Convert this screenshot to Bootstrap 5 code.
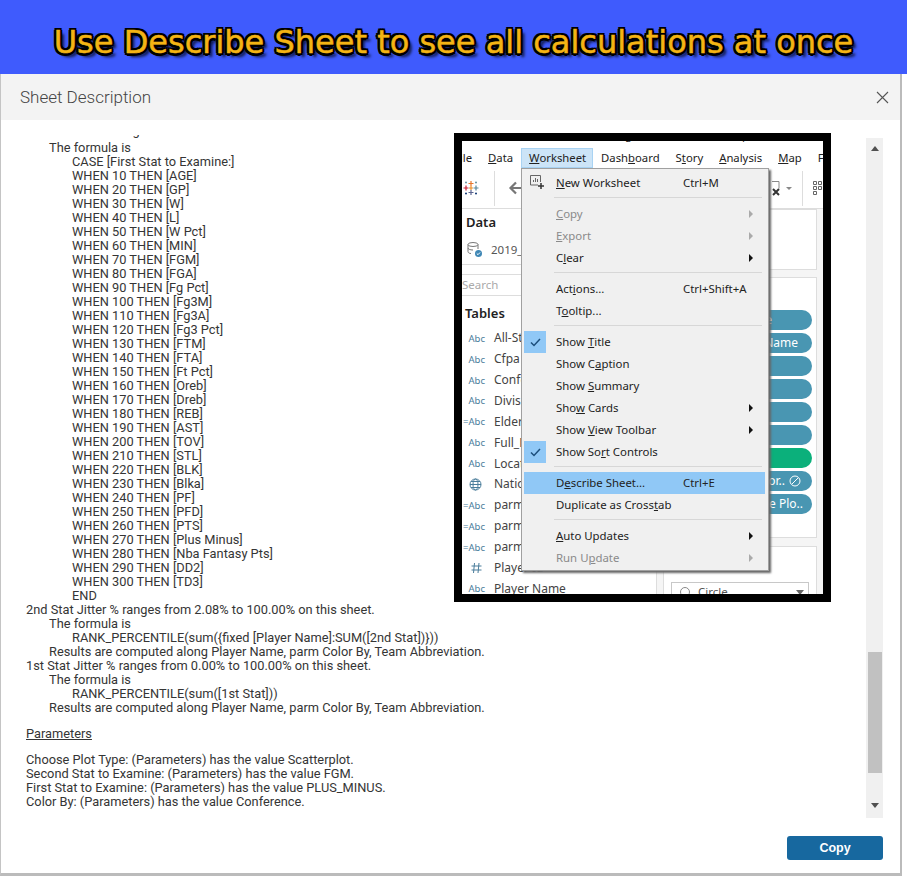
<!doctype html>
<html lang="en">
<head>
<meta charset="utf-8">
<title>Use Describe Sheet</title>
<link href="https://cdn.jsdelivr.net/npm/bootstrap@5.3.0/dist/css/bootstrap.min.css" rel="stylesheet">
<style>
html,body{height:882px;overflow:hidden;background:#fff}
body{font-family:"Roboto","Liberation Sans",sans-serif;color:#333}
.promo{height:74px;padding-top:9px;background:#3f5bfd;font-family:"DejaVu Sans",sans-serif;font-size:32px;color:#f4b414;white-space:nowrap;-webkit-text-stroke:.5px #f4b414;
text-shadow:-2.5px 0 #000,2.5px 0 #000,0 -2.5px #000,0 2.5px #000,-2px -2px #000,2px -2px #000,-2px 2px #000,2px 2px #000,4px 4px 3px #000c}
.sheet{width:902px;height:802px;border:0;border-radius:0;border-left:1px solid #c4c4c4;border-right:2px solid #bbb;border-bottom:3px solid #bbb;box-shadow:none}
.sheet-head{height:46px;background:#f3f3f3;padding:0 11px 0 19px;border:0;border-radius:0}
.sheet-title{font-size:17px;font-weight:300;line-height:1;color:#444}
.close-x{background:none;border:0;padding:0;line-height:0}
.sheet-body{padding:13px 17px 0 25px;min-height:0;flex:1}
.pane{flex:1;height:684px;overflow:hidden;font-size:12.8px;line-height:14px;color:#353535}
.pane div{white-space:nowrap}
.cut{margin-top:2px;height:6px;overflow:hidden}
.cut span{display:block;margin-top:-11px}
.in1{padding-left:23px}.in2{padding-left:46px}
.gap12{margin-top:12px}
.sbar{width:17px;height:680px;margin-top:5px;background:#f0f0f0;flex:none}
.sbar i{display:block;width:0;height:0;border-left:4px solid transparent;border-right:4px solid transparent}
.sup{border-bottom:5px solid #505050}
.sdn{border-top:5px solid #505050}
.sthumb{width:14px;height:121px;background:#c1c1c1;margin-top:501px;margin-bottom:30px}
.sheet-foot{padding:22px 17px 13px;border:0}
.copy-btn{width:96px;height:24px;padding:0;background:#17689f;border:0;border-radius:3px;color:#fff;font:700 12.5px/24px "Liberation Sans",sans-serif}
.copy-btn:hover{background:#17689f;color:#fff}
/* pasted screenshot */
.shot{float:right;width:377px;height:469px;margin-right:35px;border:8px solid #000;background:#fff;overflow:hidden;position:relative;font-family:"Noto Sans","Open Sans",sans-serif;font-size:11.5px;color:#222;white-space:nowrap;line-height:1.2}
.shot u{text-decoration-thickness:1px;text-underline-offset:1px}
.strip{height:7px;position:relative;overflow:hidden}
.strip span{position:absolute;top:-13px;color:#333}
.frag1{left:163px}.frag2{left:280px}
.mbar{height:20px;margin-left:-16px;font-size:11.3px}
.mbar span{padding:0 8px;line-height:20px}
.mbar .on{background:#cce4f7;box-shadow:inset 0 0 0 1px #a9d3f3;width:72px}
.tbar{height:41px;border-bottom:1px solid #ddd;padding-left:1px}
.tsep{width:1px;height:35px;background:#ddd}
.g15{margin-left:15px}.g13{margin-left:13px}.g5{margin-left:5px}.g10{margin-left:10px}
.work{height:393px}
.lside{width:195px;flex:none;border-right:1px solid #ddd;background:#fff}
.lhead{height:56px;border-bottom:1px solid #ddd;padding:5px 4px 0;}
.lhead b{font-size:13px;font-weight:600;display:block;line-height:17px}
.ds{margin-top:10px;color:#555;font-size:11.5px}
.lsearch{height:22px;margin-top:9px;border-top:1px solid #ddd;border-bottom:1px solid #ddd;color:#aaa;line-height:20px;padding-left:0}
.ltables{font-size:13px;font-weight:600;padding:9px 3px 0;line-height:17px;height:32px}
.lrow{height:20.9px;display:flex;align-items:center;color:#444;font-size:12px}
.lrow em{font-style:normal;width:23px;text-align:right;margin-right:9px;font-size:9.5px;color:#4a7d9b;flex:none}
.lrow em svg{margin-right:3px}
.rside{flex:1;background:#f5f5f5;padding:0 6px}
.rcard{background:#fff;border:1px solid #ddd}
.rc1{height:61px;margin-bottom:7px}
.rc2{height:261px;margin-bottom:8px;padding:32px 4px 0 0}
.rc3{height:80px;padding:35px 7px 0}
.pill{height:20px;margin-bottom:3px;background:#4996b2;border-radius:10px;color:#fff;text-align:right;padding-right:14px;line-height:20px;font-size:12px}
.pill.gr{background:#0bb07b}
.pill.hid{padding-right:50px}
.pill.p40{padding-right:40px}
.pill.p9{padding-right:9px}
.pill.p11{padding-right:11px}
.markbox{height:20px;border:1px solid #c8c8c8;padding-left:8px;color:#555}
.drop{border-top:5px solid #666;border-left:4px solid transparent;border-right:4px solid transparent;width:0;height:0}
.drop.pale{border-top-color:#888;border-left-width:3px;border-right-width:3px;border-top-width:3px}
.wmenu{position:absolute;left:59px;top:27px;width:248px;height:403px;background:#f0f0f0;border:1px solid #a0a0a0;box-shadow:2px 2px 2px #666;padding:3px 3px 0 2px;font-size:11.4px}
.mi{height:22px;line-height:22px;padding-left:32px;display:flex;position:relative}
.mi .lab{width:127px;flex:none}
.mi.off{color:#8a8a8a}
.mi.hot{background:#90c8f6}
.mi .chk{position:absolute;left:0;top:0;width:22px;height:22px;background:#90c8f6;display:flex;align-items:center;justify-content:center}
.mi .tri{position:absolute;right:12px;top:7px;border-left:4px solid #111;border-top:4px solid transparent;border-bottom:4px solid transparent;width:0;height:0}
.mi.off .tri{border-left-color:#aaa}
.mi .mico{position:absolute;left:5px;top:2px}
.msep{height:1px;background:#d7d7d7;margin:3px 3px 5px 30px}
</style>
</head>
<body>
<header class="promo d-flex align-items-center justify-content-center">Use Describe Sheet to see all calculations at once</header>
<section class="modal-content sheet d-flex flex-column">
  <div class="modal-header sheet-head d-flex align-items-center justify-content-between">
    <h1 class="modal-title sheet-title">Sheet Description</h1>
    <button class="close-x" type="button" aria-label="Close"><svg width="13" height="13" viewBox="0 0 13 13"><path d="M1 1 12 12M12 1 1 12" stroke="#555" stroke-width="1.1" fill="none"/></svg></button>
  </div>
  <div class="modal-body sheet-body d-flex align-items-start">
    <div class="pane">
      <div class="shot">
        <div class="strip"><span class="frag1">g</span><span class="frag2">p</span></div>
        <div class="mbar d-flex">
          <span>File</span><span><u>D</u>ata</span><span class="on"><u>W</u>orksheet</span><span>Dash<u>b</u>oard</span><span>S<u>t</u>ory</span><span><u>A</u>nalysis</span><span><u>M</u>ap</span><span>Format</span>
        </div>
        <div class="tbar d-flex align-items-center">
          <svg width="16" height="16" viewBox="0 0 16 16" fill="none" stroke-width="1.2"><path d="M8 1v5M5.500 3.500h5" stroke="#e8762b"/><path d="M8 10v5M5.500 12.500h5" stroke="#5b6591"/><path d="M3 5.500v5M.5 8h5" stroke="#c72035"/><path d="M13 5.500v5M10.500 8h5" stroke="#59879b"/><path d="M6 8h4M8 6v4" stroke="#eb912b"/><path d="M3 1.500v2M2 2.500h2M13 1.500v2M12 2.500h2" stroke="#7099a6"/><path d="M3 12.500v2M2 13.500h2M13 12.500v2M12 13.500h2" stroke="#1f457e"/></svg>
          <div class="tsep g15"></div>
          <svg class="g13" width="16" height="14" viewBox="0 0 16 14" fill="none"><path d="M15 7H3M8 1.500 2.500 7 8 12.500" stroke="#777" stroke-width="2.200"/></svg>
          <div class="flex-grow-1"></div>
          <svg width="13" height="16" viewBox="0 0 13 16" fill="none"><path d="M4 1.500h7v7" stroke="#888"/><path d="M5 9l6 6M11 9l-6 6" stroke="#333" stroke-width="2"/></svg>
          <div class="drop pale g5"></div>
          <div class="tsep g10"></div>
          <svg class="g10" width="10" height="16" viewBox="0 0 10 16" fill="none" stroke="#666"><path d="M.5 1.500h3v3h-3zM5.500 1.500h3v3h-3zM.5 6.500h3v3h-3zM5.500 6.500h3v3h-3zM.5 11.500h3v3h-3z"/></svg>
        </div>
        <div class="work d-flex">
          <div class="lside">
            <div class="lhead"><b>Data</b>
              <div class="ds d-flex align-items-center gap-1"><svg width="17" height="17" viewBox="0 0 17 17" fill="none" stroke="#777"><ellipse cx="7" cy="3.500" rx="5" ry="2"/><path d="M2 3.500v7c0 1 1 2 3 2M12 3.500V8M2 7c0 1 2 2 5 2"/><circle cx="12.500" cy="12.500" r="3.500" fill="#3f87b5" stroke="none"/><path d="M10.800 12.500l1.200 1.200 2-2.200" stroke="#fff"/></svg><span class="ms-1">2019_NBA_Stats</span></div>
            </div>
            <div class="lsearch">Search</div>
            <div class="ltables">Tables</div>
            <div class="lrow"><em>Abc</em>All-Star</div>
            <div class="lrow"><em>Abc</em>Cfpa Rank</div>
            <div class="lrow"><em>Abc</em>Conference</div>
            <div class="lrow"><em>Abc</em>Division</div>
            <div class="lrow"><em>=Abc</em>Elder</div>
            <div class="lrow"><em>Abc</em>Full_Name</div>
            <div class="lrow"><em>Abc</em>Location</div>
            <div class="lrow"><em><svg width="13" height="13" viewBox="0 0 13 13" fill="none" stroke="#4a7d9b"><circle cx="6.500" cy="6.500" r="5.500"/><ellipse cx="6.500" cy="6.500" rx="2.500" ry="5.500"/><path d="M1 6.500h11M2 3.500h9M2 9.500h9"/></svg></em>Nationality</div>
            <div class="lrow"><em>=Abc</em>parm Color By</div>
            <div class="lrow"><em>=Abc</em>parm Plot</div>
            <div class="lrow"><em>=Abc</em>parm Stat</div>
            <div class="lrow"><em><svg width="11" height="12" viewBox="0 0 11 12" fill="none" stroke="#4a7d9b"><path d="M3.500 1 2.500 11M8 1 7 11M.5 4h10M.5 8h10"/></svg></em>Player Id</div>
            <div class="lrow"><em>Abc</em>Player Name</div>
          </div>
          <div class="rside">
            <div class="rcard rc1"></div>
            <div class="rcard rc2">
              <div class="pill p40">Age</div><div class="pill">Player Name</div><div class="pill hid">Team</div><div class="pill hid">Stat</div><div class="pill hid">Stat</div><div class="pill hid">Stat</div><div class="pill gr hid">Jitter</div>
              <div class="pill p11 d-flex align-items-center justify-content-end gap-1"><span>Color..</span><svg width="12" height="12" viewBox="0 0 12 12" fill="none" stroke="#fff"><circle cx="6" cy="6" r="5"/><path d="M3 9 9 3"/></svg></div>
              <div class="pill p9">Tooltip Scale Plo..</div>
            </div>
            <div class="rcard rc3">
              <div class="markbox d-flex align-items-center"><svg width="10" height="10" viewBox="0 0 10 10" fill="none" stroke="#888"><circle cx="5" cy="5" r="4.500"/></svg><span class="ms-2">Circle</span><span class="flex-grow-1"></span><span class="drop me-1"></span></div>
            </div>
          </div>
        </div>
        <div class="wmenu">
          <div class="mi"><svg class="mico" width="16" height="16" viewBox="0 0 16 16" fill="none" stroke="#666"><path d="M9 11H1.500V1.500h10V8"/><path d="M4.500 8V6M6.500 8V4M8.500 8V5"/><path d="M12 9v6M9 12h6" stroke="#333" stroke-width="1.500"/></svg><span class="lab"><u>N</u>ew Worksheet</span><span>Ctrl+M</span></div>
          <div class="msep"></div>
          <div class="mi off"><span class="lab"><u>C</u>opy</span><i class="tri"></i></div>
          <div class="mi off"><span class="lab"><u>E</u>xport</span><i class="tri"></i></div>
          <div class="mi"><span class="lab">C<u>l</u>ear</span><i class="tri"></i></div>
          <div class="msep"></div>
          <div class="mi"><span class="lab">Act<u>i</u>ons...</span><span>Ctrl+Shift+A</span></div>
          <div class="mi"><span class="lab">T<u>o</u>oltip...</span></div>
          <div class="msep"></div>
          <div class="mi"><i class="chk"><svg width="11" height="9" viewBox="0 0 11 9" fill="none"><path d="M1 4.500 4 7.500 10 1" stroke="#1d4f7c" stroke-width="1.500"/></svg></i><span class="lab">Show <u>T</u>itle</span></div>
          <div class="mi"><span class="lab">Show C<u>a</u>ption</span></div>
          <div class="mi"><span class="lab">Show <u>S</u>ummary</span></div>
          <div class="mi"><span class="lab">Sho<u>w</u> Cards</span><i class="tri"></i></div>
          <div class="mi"><span class="lab">Show <u>V</u>iew Toolbar</span><i class="tri"></i></div>
          <div class="mi"><i class="chk"><svg width="11" height="9" viewBox="0 0 11 9" fill="none"><path d="M1 4.500 4 7.500 10 1" stroke="#1d4f7c" stroke-width="1.500"/></svg></i><span class="lab">Show So<u>r</u>t Controls</span></div>
          <div class="msep"></div>
          <div class="mi hot"><span class="lab">D<u>e</u>scribe Sheet...</span><span>Ctrl+E</span></div>
          <div class="mi"><span class="lab">Duplicate as Cross<u>t</u>ab</span></div>
          <div class="msep"></div>
          <div class="mi"><span class="lab"><u>A</u>uto Updates</span><i class="tri"></i></div>
          <div class="mi off"><span class="lab">Run U<u>p</u>date</span><i class="tri"></i></div>
        </div>
      </div>
      <div class="cut"><span>1st Stat has a rating</span></div>
      <div class="in1">The formula is</div>
      <div class="in2">CASE [First Stat to Examine:]</div>
      <div class="in2">WHEN 10 THEN [AGE]</div>
      <div class="in2">WHEN 20 THEN [GP]</div>
      <div class="in2">WHEN 30 THEN [W]</div>
      <div class="in2">WHEN 40 THEN [L]</div>
      <div class="in2">WHEN 50 THEN [W Pct]</div>
      <div class="in2">WHEN 60 THEN [MIN]</div>
      <div class="in2">WHEN 70 THEN [FGM]</div>
      <div class="in2">WHEN 80 THEN [FGA]</div>
      <div class="in2">WHEN 90 THEN [Fg Pct]</div>
      <div class="in2">WHEN 100 THEN [Fg3M]</div>
      <div class="in2">WHEN 110 THEN [Fg3A]</div>
      <div class="in2">WHEN 120 THEN [Fg3 Pct]</div>
      <div class="in2">WHEN 130 THEN [FTM]</div>
      <div class="in2">WHEN 140 THEN [FTA]</div>
      <div class="in2">WHEN 150 THEN [Ft Pct]</div>
      <div class="in2">WHEN 160 THEN [Oreb]</div>
      <div class="in2">WHEN 170 THEN [Dreb]</div>
      <div class="in2">WHEN 180 THEN [REB]</div>
      <div class="in2">WHEN 190 THEN [AST]</div>
      <div class="in2">WHEN 200 THEN [TOV]</div>
      <div class="in2">WHEN 210 THEN [STL]</div>
      <div class="in2">WHEN 220 THEN [BLK]</div>
      <div class="in2">WHEN 230 THEN [Blka]</div>
      <div class="in2">WHEN 240 THEN [PF]</div>
      <div class="in2">WHEN 250 THEN [PFD]</div>
      <div class="in2">WHEN 260 THEN [PTS]</div>
      <div class="in2">WHEN 270 THEN [Plus Minus]</div>
      <div class="in2">WHEN 280 THEN [Nba Fantasy Pts]</div>
      <div class="in2">WHEN 290 THEN [DD2]</div>
      <div class="in2">WHEN 300 THEN [TD3]</div>
      <div class="in2">END</div>
      <div>2nd Stat Jitter % ranges from 2.08% to 100.00% on this sheet.</div>
      <div class="in1">The formula is</div>
      <div class="in2">RANK_PERCENTILE(sum({fixed [Player Name]:SUM([2nd Stat])}))</div>
      <div class="in1">Results are computed along Player Name, parm Color By, Team Abbreviation.</div>
      <div>1st Stat Jitter % ranges from 0.00% to 100.00% on this sheet.</div>
      <div class="in1">The formula is</div>
      <div class="in2">RANK_PERCENTILE(sum([1st Stat]))</div>
      <div class="in1">Results are computed along Player Name, parm Color By, Team Abbreviation.</div>
      <div class="gap12 text-decoration-underline">Parameters</div>
      <div class="gap12">Choose Plot Type: (Parameters) has the value Scatterplot.</div>
      <div>Second Stat to Examine: (Parameters) has the value FGM.</div>
      <div>First Stat to Examine: (Parameters) has the value PLUS_MINUS.</div>
      <div>Color By: (Parameters) has the value Conference.</div>
    </div>
    <div class="sbar d-flex flex-column align-items-center pt-2">
      <i class="sup"></i>
      <span class="sthumb"></span>
      <i class="sdn"></i>
    </div>
  </div>
  <div class="modal-footer sheet-foot"><button class="btn copy-btn" type="button">Copy</button></div>
</section>
<script src="https://cdn.jsdelivr.net/npm/bootstrap@5.3.0/dist/js/bootstrap.bundle.min.js"></script>
</body>
</html>
